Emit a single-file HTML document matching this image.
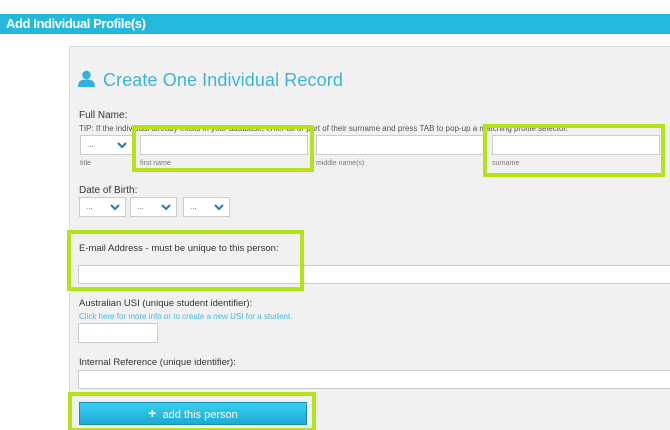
<!DOCTYPE html>
<html><head><style>
*{margin:0;padding:0;box-sizing:border-box}
html,body{width:670px;height:430px;overflow:hidden}
body{background:#fff;position:relative;font-family:"Liberation Sans",sans-serif;color:#333}
.a{position:absolute}
.hdr{left:0;top:14px;width:670px;height:20px;background:#25b8dd;color:#fff;font-weight:bold;font-size:13px;line-height:20px;padding-left:6px;letter-spacing:-0.4px}
.panel{left:69px;top:46px;width:610px;height:390px;background:#f1f1f1;border:1px solid #ddd}
.inp{background:#fff;border:1px solid #ccc}
.lbl{font-size:10px;color:#333}
.sm{font-size:7px;color:#777}
.g{border:4px solid #b5e31a}
.sel{background:#fff;border:1px solid #ccc;font-size:8px;color:#666;padding-left:6px;line-height:18px}
.sel svg{position:absolute;right:5px;top:6px}
</style></head><body>
<div class="a hdr">Add Individual Profile(s)</div>
<div class="a panel"></div>
<svg class="a" style="left:78px;top:70px" width="17" height="17" viewBox="0 0 17 17"><circle cx="8.5" cy="5" r="4.3" fill="#2fb2dd"/><path d="M0 17 C0 11 3 9.5 8.5 9.5 C14 9.5 17 11 17 17Z" fill="#2fb2dd"/></svg>
<div class="a" style="left:103px;top:70px;font-size:18px;color:#3ab4dc;letter-spacing:0.1px">Create One Individual Record</div>
<div class="a lbl" style="left:79px;top:110px">Full Name:</div>
<div class="a" style="left:79px;top:124px;font-size:8px;color:#555">TIP: If the individual already exists in your database, enter all or part of their surname and press TAB to pop-up a matching profile selector.</div>
<div class="a sel" style="left:80px;top:135px;width:53px;height:20px">...<svg width="10" height="7"><path d="M1 1 L5 5 L9 1" stroke="#2f7fb8" stroke-width="2.2" fill="none"/></svg></div>
<div class="a inp" style="left:140px;top:135px;width:168px;height:20px"></div>
<div class="a inp" style="left:316px;top:135px;width:170px;height:20px"></div>
<div class="a inp" style="left:492px;top:135px;width:168px;height:20px"></div>
<div class="a sm" style="left:80px;top:160px">title</div>
<div class="a sm" style="left:140px;top:160px">first name</div>
<div class="a sm" style="left:316px;top:160px">middle name(s)</div>
<div class="a sm" style="left:492px;top:160px">surname</div>
<div class="a g" style="left:132px;top:125px;width:182px;height:47px"></div>
<div class="a g" style="left:483px;top:124px;width:182px;height:53px"></div>
<div class="a lbl" style="left:79px;top:185px">Date of Birth:</div>
<div class="a sel" style="left:79px;top:197px;width:47px;height:20px">...<svg width="10" height="7"><path d="M1 1 L5 5 L9 1" stroke="#2f7fb8" stroke-width="2.2" fill="none"/></svg></div>
<div class="a sel" style="left:130px;top:197px;width:47px;height:20px">...<svg width="10" height="7"><path d="M1 1 L5 5 L9 1" stroke="#2f7fb8" stroke-width="2.2" fill="none"/></svg></div>
<div class="a sel" style="left:183px;top:197px;width:47px;height:20px">...<svg width="10" height="7"><path d="M1 1 L5 5 L9 1" stroke="#2f7fb8" stroke-width="2.2" fill="none"/></svg></div>
<div class="a lbl" style="left:79px;top:243px;font-size:9.5px">E-mail Address - must be unique to this person:</div>
<div class="a inp" style="left:78px;top:265px;width:600px;height:19px"></div>
<div class="a g" style="left:67px;top:230px;width:237px;height:61px"></div>
<div class="a lbl" style="left:79px;top:298px;font-size:9.5px">Australian USI (unique student identifier):</div>
<div class="a" style="left:79px;top:312px;font-size:8px;color:#4cb6df">Click here for more info or to create a new USI for a student.</div>
<div class="a inp" style="left:78px;top:323px;width:80px;height:20px"></div>
<div class="a lbl" style="left:79px;top:357px;font-size:9.5px">Internal Reference (unique identifier):</div>
<div class="a inp" style="left:78px;top:370px;width:600px;height:19px"></div>
<div class="a g" style="left:68px;top:392px;width:248px;height:40px"></div>
<div class="a" style="left:79px;top:402px;width:228px;height:23px;background:linear-gradient(#36d0f2,#1fa9d3);border:1px solid #1a8fb5;color:#fff;font-size:11px;text-align:center;line-height:21px"><b style="font-size:14px">+</b>&nbsp; add this person</div>
</body></html>
